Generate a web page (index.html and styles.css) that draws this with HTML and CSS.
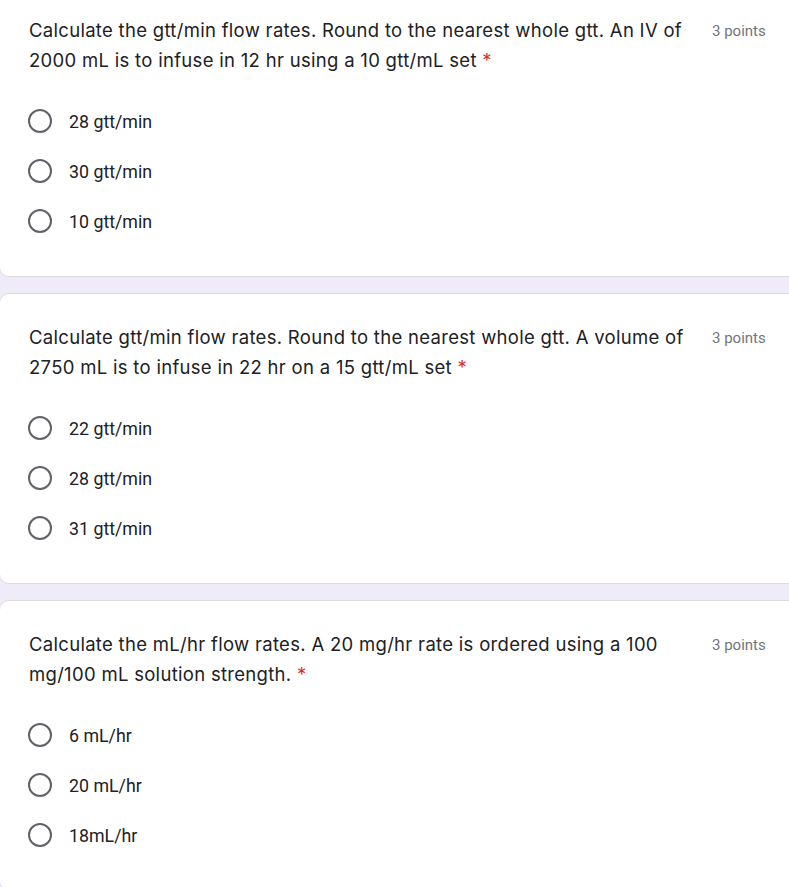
FILE: index.html
```html
<!DOCTYPE html>
<html>
<head>
<meta charset="utf-8">
<link rel="stylesheet" href="styles.css">
</head>
<body>
<div class="list">
  <div class="card">
    <div class="head">
      <div class="title">Calculate the gtt/min flow rates. Round to the nearest whole gtt. An IV of 2000 mL is to infuse in 12 hr using a 10 gtt/mL set <span class="req">*</span></div>
      <div class="points">3 points</div>
    </div>
    <div class="options">
      <div class="opt"><span class="radio"></span><span class="label">28 gtt/min</span></div>
      <div class="opt"><span class="radio"></span><span class="label">30 gtt/min</span></div>
      <div class="opt"><span class="radio"></span><span class="label">10 gtt/min</span></div>
    </div>
  </div>
  <div class="card">
    <div class="head">
      <div class="title">Calculate gtt/min flow rates. Round to the nearest whole gtt. A volume of 2750 mL is to infuse in 22 hr on a 15 gtt/mL set <span class="req">*</span></div>
      <div class="points">3 points</div>
    </div>
    <div class="options">
      <div class="opt"><span class="radio"></span><span class="label">22 gtt/min</span></div>
      <div class="opt"><span class="radio"></span><span class="label">28 gtt/min</span></div>
      <div class="opt"><span class="radio"></span><span class="label">31 gtt/min</span></div>
    </div>
  </div>
  <div class="card">
    <div class="head">
      <div class="title">Calculate the mL/hr flow rates. A 20 mg/hr rate is ordered using a 100 mg/100 mL solution strength. <span class="req">*</span></div>
      <div class="points">3 points</div>
    </div>
    <div class="options">
      <div class="opt"><span class="radio"></span><span class="label">6 mL/hr</span></div>
      <div class="opt"><span class="radio"></span><span class="label">20 mL/hr</span></div>
      <div class="opt"><span class="radio"></span><span class="label">18mL/hr</span></div>
    </div>
  </div>
</div>
</body>
</html>
```

FILE: styles.css
```css
html, body {
  margin: 0;
  padding: 0;
  background: #efebf8;
  overflow: hidden;
  height: 887px;
}

.list {
  display: flex;
  flex-direction: column;
  gap: 16px;
  margin-top: -14px;
  margin-left: -1px;
  width: 800px;
}

.card {
  background: #ffffff;
  border: 1px solid #dadce0;
  border-radius: 10px;
  padding: 28px 32px 30px 29px;
}

.head {
  display: flex;
  align-items: flex-start;
}

.title {
  flex: 1;
  font-family: Inter, sans-serif;
  font-size: 18.5px;
  letter-spacing: 0.3px;
  line-height: 30px;
  color: #202124;
}

.req {
  color: #d93025;
}

.points {
  flex: none;
  width: 54px;
  padding-left: 12px;
  padding-top: 1px;
  font-family: Roboto, sans-serif;
  font-size: 15px;
  line-height: 30px;
  color: #70757a;
  white-space: nowrap;
}

.options {
  margin-top: 21px;
  display: flex;
  flex-direction: column;
}

.opt {
  height: 50px;
  display: flex;
  align-items: center;
}

.radio {
  width: 24px;
  height: 24px;
  box-sizing: border-box;
  border: 2px solid #5f6368;
  border-radius: 50%;
  margin-left: -1px;
  flex: none;
}

.label {
  margin-left: 17px;
  font-family: Roboto, sans-serif;
  font-size: 17.8px;
  color: #202124;
}
```
